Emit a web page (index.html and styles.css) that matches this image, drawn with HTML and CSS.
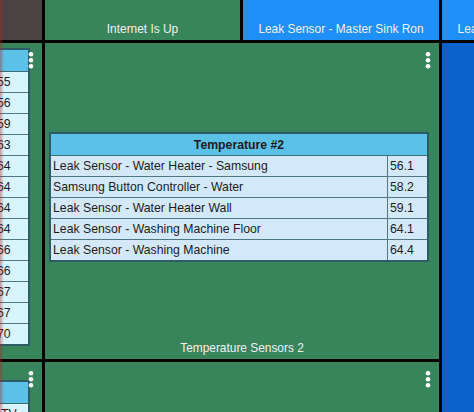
FILE: index.html
```html
<!DOCTYPE html>
<html>
	<head>
		<meta charset="UTF-8">
		<title>Dashboard</title>
		<link rel="stylesheet" href="styles.css">
	</head>
	<body>
		<div class="board">
			<!-- row 1 -->
			<div class="tile dark w2">
				<div class="body"></div>
				<div class="label">Garage Door</div>
			</div>
			<div class="tile green">
				<div class="body"></div>
				<div class="label">Internet Is Up</div>
			</div>
			<div class="tile blue">
				<div class="body"></div>
				<div class="label">Leak Sensor - Master Sink Ron</div>
			</div>
			<div class="tile blue">
				<div class="body"></div>
				<div class="label">Leak Sensor - Master Sink Kim</div>
			</div>

			<!-- row 2 -->
			<div class="tile green w2 h2">
				<svg class="dots" width="8" height="17" viewBox="0 0 8 17"><circle cx="4" cy="2.3" r="2.3"/><circle cx="4" cy="8.3" r="2.3"/><circle cx="4" cy="14.3" r="2.3"/></svg>
				<div class="body pale">
					<table class="grid">
						<tr><th colspan="2">Temperature #1</th></tr>
						<tr><td>Multisensor - Living Room</td><td class="val sm">55</td></tr>
						<tr><td>Multisensor - Kitchen</td><td class="val sm">56</td></tr>
						<tr><td>Multisensor - Dining Room</td><td class="val sm">59</td></tr>
						<tr><td>Multisensor - Office</td><td class="val sm">63</td></tr>
						<tr><td>Multisensor - Master Bedroom</td><td class="val sm">64</td></tr>
						<tr><td>Multisensor - Guest Bedroom</td><td class="val sm">64</td></tr>
						<tr><td>Multisensor - Master Bath</td><td class="val sm">64</td></tr>
						<tr><td>Multisensor - Hallway</td><td class="val sm">64</td></tr>
						<tr><td>Multisensor - Laundry</td><td class="val sm">66</td></tr>
						<tr><td>Multisensor - Basement</td><td class="val sm">66</td></tr>
						<tr><td>Multisensor - Family Room</td><td class="val sm">67</td></tr>
						<tr><td>Multisensor - Den</td><td class="val sm">67</td></tr>
						<tr><td>Multisensor - Sun Room</td><td class="val sm">70</td></tr>
					</table>
				</div>
				<div class="label">Temperature Sensors 1</div>
			</div>
			<div class="tile green w2 h2">
				<svg class="dots" width="8" height="17" viewBox="0 0 8 17"><circle cx="4" cy="2.3" r="2.3"/><circle cx="4" cy="8.3" r="2.3"/><circle cx="4" cy="14.3" r="2.3"/></svg>
				<div class="body">
					<table class="grid">
						<tr><th colspan="2">Temperature #2</th></tr>
						<tr><td>Leak Sensor - Water Heater - Samsung</td><td class="val">56.1</td></tr>
						<tr><td>Samsung Button Controller - Water</td><td class="val">58.2</td></tr>
						<tr><td>Leak Sensor - Water Heater Wall</td><td class="val">59.1</td></tr>
						<tr><td>Leak Sensor - Washing Machine Floor</td><td class="val">64.1</td></tr>
						<tr><td>Leak Sensor - Washing Machine</td><td class="val">64.4</td></tr>
					</table>
				</div>
				<div class="label">Temperature Sensors 2</div>
			</div>
			<div class="tile navy h3">
				<div class="body"></div>
				<div class="label">Motion</div>
			</div>

			<!-- row 4 -->
			<div class="tile green w2 h2">
				<svg class="dots" width="8" height="17" viewBox="0 0 8 17"><circle cx="4" cy="2.3" r="2.3"/><circle cx="4" cy="8.3" r="2.3"/><circle cx="4" cy="14.3" r="2.3"/></svg>
				<div class="body top">
					<table class="grid">
						<tr><th colspan="2">Switches</th></tr>
						<tr><td>Living Room</td><td class="val sm"><span class="off">TV</span></td></tr>
						<tr><td>Kitchen</td><td class="val sm">On</td></tr>
					</table>
				</div>
				<div class="label">Switches</div>
			</div>
			<div class="tile green w2 h2">
				<svg class="dots" width="8" height="17" viewBox="0 0 8 17"><circle cx="4" cy="2.3" r="2.3"/><circle cx="4" cy="8.3" r="2.3"/><circle cx="4" cy="14.3" r="2.3"/></svg>
				<div class="body"></div>
				<div class="label">Humidity</div>
			</div>
		</div>
		<div class="edge"></div>
	</body>
</html>
```

FILE: styles.css
```css
body {
	margin: 0;
	padding: 0;
	background: #000;
	overflow: hidden;
	font-family: "Liberation Sans", Arial, sans-serif;
}

/* the dashboard is scrolled, so the grid starts above and left of the window */
.board {
	display: grid;
	grid-template-columns: 195px 196px 195px 196px 195px;
	grid-template-rows: 157px 156px 157px 156px;
	gap: 3px;
	margin: -117px 0 0 -352px;
	width: 989px;
}

.tile {
	position: relative;
	display: flex;
	flex-direction: column;
	overflow: hidden;
}

.w2 {
	grid-column: span 2;
}

.h2 {
	grid-row: span 2;
}

.h3 {
	grid-row: span 3;
}

.dark {
	background: #4a4343;
}

.green {
	background: #38845b;
}

.blue {
	background: #1e90f8;
}

.navy {
	background: #0b62cc;
}

.body {
	flex: 1;
	min-height: 0;
	display: flex;
	align-items: center;
	padding: 14px 10px 0 4px;
}

.body.pale {
	padding-right: 12px;
}

.body.top {
	align-items: flex-start;
	padding: 18px 12px 0 4px;
}

.label {
	height: 22px;
	line-height: 22px;
	text-align: center;
	color: #f2f2f2;
	font-size: 11.9px;
	white-space: nowrap;
}

.dots {
	position: absolute;
	top: 9px;
	right: 7px;
	fill: #fff;
}

.grid {
	width: 100%;
	border-collapse: collapse;
	border: 2px solid #2d5b66;
	font-size: 12.25px;
	color: #1c1c1c;
}

.grid th {
	height: 19px;
	background: #5bc1e6;
	font-weight: bold;
	text-align: center;
	border: 1px solid #3c6d78;
}

.grid td {
	height: 20px;
	padding: 0 2px;
	background: #d3e8f8;
	border: 1px solid #4f7884;
	white-space: nowrap;
}

.pale .grid td, .top .grid td {
	background: #d8f5fd;
}

.grid .val {
	width: 35px;
}

.grid .sm {
	width: 29px;
}

.off {
	border-left: 3px solid #d02020;
	padding-left: 1px;
}

.edge {
	position: fixed;
	left: 0;
	top: 0;
	bottom: 0;
	width: 4px;
	background: linear-gradient(to right, rgba(180, 40, 40, 0.45), rgba(180, 40, 40, 0));
}
```
